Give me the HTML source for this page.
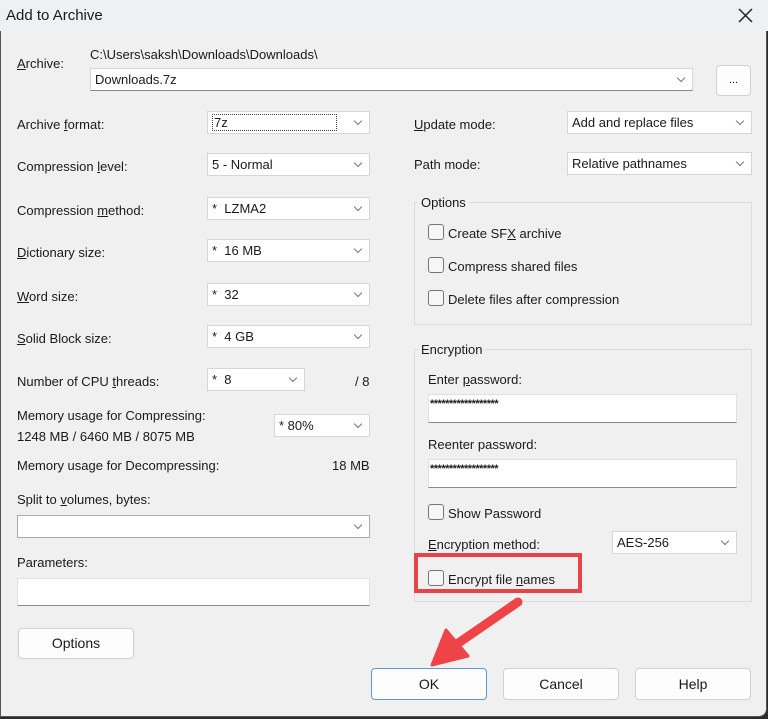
<!DOCTYPE html>
<html><head><meta charset="utf-8"><style>
*{box-sizing:border-box;margin:0;padding:0}
body{width:768px;height:719px;background:#2b2b2b;font-family:"Liberation Sans",sans-serif;font-size:13px;color:#1a1a1a;position:relative;overflow:hidden}
.win{position:absolute;left:0;top:0;width:767px;height:717px;background:#f0f0f0;border:1px solid #555;border-radius:0 8px 8px 0}
.in0{position:absolute;left:-1px;top:-1px;width:768px;height:719px}
.tb{position:absolute;left:0;top:0;width:100%;height:31px;background:#eff0f3}
.a{position:absolute;white-space:nowrap}
.cb{position:absolute;background:#fff;border:1px solid #d6d6d6;height:23px;padding:3px 4px;line-height:15px}
.cb::after{content:"";position:absolute;right:8px;top:6px;width:5px;height:5px;border-right:1px solid #777;border-bottom:1px solid #777;transform:rotate(45deg)}
.in{position:absolute;background:#fff;border:1px solid #e0e0e0;border-bottom:1px solid #8a8a8a}
.btn{position:absolute;background:#fdfdfd;border:1px solid #d0d0d0;border-radius:4px;text-align:center;font-size:14px}
.chk{position:absolute;width:16px;height:16px;border:1px solid #777;border-radius:3px;background:#f6f6f6}
.grp{position:absolute;border:1px solid #dcdcdc}
.gt{position:absolute;background:#f0f0f0;padding:0 3px}
.pw{padding:3px 1px;font-size:11px;font-weight:bold;letter-spacing:-0.5px}
u{text-decoration:underline}
</style></head><body>
<div class="win"><div class="in0">
<div class="tb"></div>
<div class="a" style="left:6px;top:7px;font-size:15px">Add to Archive</div>
<svg class="a" style="left:738px;top:8px" width="15" height="15"><path d="M1 1L14 14M14 1L1 14" stroke="#222" stroke-width="1.5"/></svg>

<div class="a" style="left:17px;top:56px"><u>A</u>rchive:</div>
<div class="a" style="left:90px;top:47px">C:\Users\saksh\Downloads\Downloads\</div>
<div class="cb" style="left:90px;top:68px;width:603px;border-bottom-color:#888">Downloads.7z</div>
<div class="btn" style="left:716px;top:65px;width:35px;height:31px;line-height:28px;font-size:11px">...</div>

<div class="a" style="left:17px;top:117px">Archive <u>f</u>ormat:</div>
<div class="cb" style="left:207px;top:111px;width:163px"><span style="border:1px dotted #444;padding:0 108px 0 1px">7z</span></div>
<div class="a" style="left:17px;top:159px">Compression <u>l</u>evel:</div>
<div class="cb" style="left:207px;top:153px;width:163px">5 - Normal</div>
<div class="a" style="left:17px;top:203px">Compression <u>m</u>ethod:</div>
<div class="cb" style="left:207px;top:197px;width:163px">*&nbsp; LZMA2</div>
<div class="a" style="left:17px;top:245px"><u>D</u>ictionary size:</div>
<div class="cb" style="left:207px;top:239px;width:163px">*&nbsp; 16 MB</div>
<div class="a" style="left:17px;top:289px"><u>W</u>ord size:</div>
<div class="cb" style="left:207px;top:283px;width:163px">*&nbsp; 32</div>
<div class="a" style="left:17px;top:331px"><u>S</u>olid Block size:</div>
<div class="cb" style="left:207px;top:325px;width:163px">*&nbsp; 4 GB</div>
<div class="a" style="left:17px;top:374px">Number of CPU <u>t</u>hreads:</div>
<div class="cb" style="left:207px;top:368px;width:98px">*&nbsp; 8</div>
<div class="a" style="left:355px;top:374px">/ 8</div>
<div class="a" style="left:17px;top:408px">Memory usage for Compressing:</div>
<div class="a" style="left:17px;top:429px">1248 MB / 6460 MB / 8075 MB</div>
<div class="cb" style="left:274px;top:414px;width:96px">* 80%</div>
<div class="a" style="left:17px;top:458px">Memory usage for Decompressing:</div>
<div class="a" style="left:332px;top:458px">18 MB</div>
<div class="a" style="left:17px;top:492px">Split to <u>v</u>olumes, bytes:</div>
<div class="cb" style="left:17px;top:515px;width:353px;border-color:#aaa"></div>
<div class="a" style="left:17px;top:555px">Parameters:</div>
<div class="in" style="left:17px;top:578px;width:353px;height:28px"></div>
<div class="btn" style="left:18px;top:628px;width:116px;height:31px;line-height:29px">Options</div>

<div class="a" style="left:414px;top:117px"><u>U</u>pdate mode:</div>
<div class="cb" style="left:567px;top:111px;width:185px">Add and replace files</div>
<div class="a" style="left:414px;top:157px">Path mode:</div>
<div class="cb" style="left:567px;top:152px;width:185px">Relative pathnames</div>

<div class="grp" style="left:414px;top:202px;width:338px;height:123px"></div>
<div class="gt" style="left:418px;top:195px">Options</div>
<div class="chk" style="left:428px;top:224px"></div><div class="a" style="left:448px;top:226px">Create SF<u>X</u> archive</div>
<div class="chk" style="left:428px;top:257px"></div><div class="a" style="left:448px;top:259px">Compress shared files</div>
<div class="chk" style="left:428px;top:290px"></div><div class="a" style="left:448px;top:292px">Delete files after compression</div>

<div class="grp" style="left:414px;top:349px;width:338px;height:253px"></div>
<div class="gt" style="left:418px;top:342px">Encryption</div>
<div class="a" style="left:428px;top:372px">Enter <u>p</u>assword:</div>
<div class="in pw" style="left:428px;top:394px;width:309px;height:29px">******************</div>
<div class="a" style="left:428px;top:437px">Reenter password:</div>
<div class="in pw" style="left:428px;top:459px;width:309px;height:29px">******************</div>
<div class="chk" style="left:428px;top:504px"></div><div class="a" style="left:448px;top:506px">Show Password</div>
<div class="a" style="left:428px;top:537px"><u>E</u>ncryption method:</div>
<div class="cb" style="left:612px;top:531px;width:125px">AES-256</div>
<div class="chk" style="left:428px;top:570px"></div><div class="a" style="left:448px;top:572px">Encrypt file <u>n</u>ames</div>
<div class="a" style="left:414px;top:553px;width:168px;height:40px;border:4px solid #e8424a"></div>

<div class="btn" style="left:371px;top:668px;width:116px;height:32px;line-height:30px;border-color:#5a9ad6">OK</div>
<div class="btn" style="left:503px;top:668px;width:116px;height:32px;line-height:30px">Cancel</div>
<div class="btn" style="left:635px;top:668px;width:116px;height:32px;line-height:30px">Help</div>

<svg class="a" style="left:0;top:0" width="768" height="719"><path d="M518 602L454 646" stroke="#ee4448" stroke-width="9" stroke-linecap="round"/><path d="M432 665L446 630L468 656Z" fill="#ee4448" stroke="#ee4448" stroke-width="3" stroke-linejoin="round"/></svg>
</div></div>
</body></html>
